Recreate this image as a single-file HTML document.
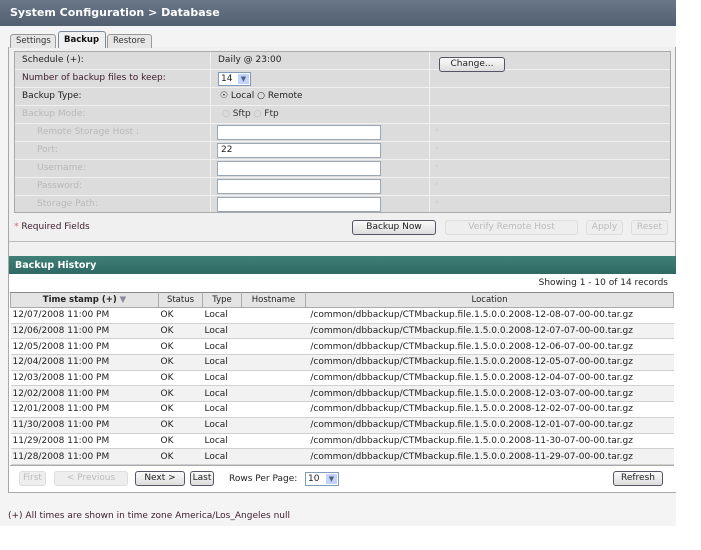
<!DOCTYPE html>
<html><head><style>
*{box-sizing:border-box;margin:0;padding:0}
body{width:701px;height:550px;background:#fff;font-family:"DejaVu Sans","Liberation Sans",sans-serif;font-size:9px;color:#222;position:relative;overflow:hidden}
.page{position:absolute;left:0;top:0;width:676px;height:526px;background:#f4f4f4}
.hdr{position:absolute;left:0;top:0;width:676px;height:26px;background:linear-gradient(#6a7789,#525f70);color:#fff;font-weight:bold;font-size:11px;padding:6px 0 0 10px;font-family:"DejaVu Sans",sans-serif}
.outer{position:absolute;left:8px;top:47px;width:668px;height:446px;border:1px solid #a8a8a8;border-top:none;background:#f0f0f0}
.tab{position:absolute;top:34px;height:14px;border:1px solid #999;border-bottom:none;background:#e6e6e6;font-size:8.5px;padding:1px 5px;border-radius:3px 3px 0 0;color:#333}
.tab.on{top:31px;height:17px;background:#f0f0f0;font-weight:bold;color:#111;padding-top:3px;border-color:#7a8a9a;z-index:2}
.tabline{position:absolute;left:8px;top:47px;width:668px;border-top:1px solid #a8a8a8}
.form{position:absolute;left:14px;top:51px;width:657px;height:162px;border:1px solid #aaa;background:#dcdcdc}
.row{position:absolute;left:0;width:655px;height:18px;border-bottom:1px solid #f0f0f0}
.row span{position:absolute;top:3px}
.c1{left:7px}.c2{left:203px}
.vl{position:absolute;top:0;width:1px;height:160px;background:#f0f0f0}
.dis{color:#b8b8b8}
.inp{position:absolute;left:202px;top:1px;width:164px;height:15px;background:#fff;border:1px solid #9aa7b5;font-size:9px;padding:1px 3px}
.star{position:absolute;left:420px;top:4px;color:#ccc;font-size:7px}
.btn{position:absolute;height:15px;border:1px solid #556;border-radius:3px;background:linear-gradient(#fafafa,#ddd);font-size:9px;text-align:center;padding-top:1px;color:#222}
.btn.d{border-color:#ddd;color:#bbb;background:#eee}
.bh{position:absolute;left:9px;top:256px;width:667px;height:18px;background:linear-gradient(#3f8078,#2e6963);color:#fff;font-weight:bold;font-size:9.5px;padding:4px 0 0 6px}
.tbl{position:absolute;left:10px;top:292px;width:664px;border-collapse:collapse;font-size:9px}
.tbl th{background:#e4e4e4;font-weight:normal;height:15px;border:1px solid #aaa;border-top:1px solid #888;font-size:8.5px}
.tbl td{height:15.7px;padding:0 0 0 2px;border-bottom:1px solid #d0d0d0;background:#fff}
.tbl tr:nth-child(odd) td{background:#f2f2f2}
.sel{position:absolute;border:1px solid #7f9db9;background:#fff;height:14px;font-size:9px;padding:1px 2px}
.sel b{position:absolute;right:1px;top:1px;width:11px;height:10px;background:#c3d3fd;color:#4d6185;font-size:7px;text-align:center;line-height:10px}
</style></head><body>
<div class="page"></div>
<div class="hdr">System Configuration &gt; Database</div>
<div class="outer"></div>
<div class="tab" style="left:10px;width:46px">Settings</div>
<div class="tab on" style="left:58px;width:48px">Backup</div>
<div class="tab" style="left:107px;width:45px">Restore</div>
<div class="form">
 <div class="vl" style="left:195px"></div><div class="vl" style="left:414px"></div>
 <div class="row" style="top:0"><span class="c1">Schedule (+):</span><span class="c2">Daily @ 23:00</span></div>
 <div class="row" style="top:18px"><span class="c1" style="color:#402030">Number of backup files to keep:</span><div class="sel" style="left:203px;top:2px;width:33px">14<b>&#9660;</b></div></div>
 <div class="row" style="top:36px"><span class="c1">Backup Type:</span><span class="c2" style="left:205px">&#9737; Local &#9675; Remote</span></div>
 <div class="row" style="top:54px"><span class="c1 dis">Backup Mode:</span><span class="c2 dis" style="left:207px">&#9675; <span style="position:static;color:#333">Sftp</span> &#9675; <span style="position:static;color:#333">Ftp</span></span></div>
 <div class="row" style="top:72px"><span class="c1 dis" style="left:22px">Remote Storage Host :</span><div class="inp"></div><span class="star">*</span></div>
 <div class="row" style="top:90px"><span class="c1 dis" style="left:22px">Port:</span><div class="inp">22</div><span class="star">*</span></div>
 <div class="row" style="top:108px"><span class="c1 dis" style="left:22px">Username:</span><div class="inp"></div><span class="star">*</span></div>
 <div class="row" style="top:126px"><span class="c1 dis" style="left:22px">Password:</span><div class="inp"></div><span class="star">*</span></div>
 <div class="row" style="top:144px;border:none"><span class="c1 dis" style="left:22px">Storage Path:</span><div class="inp"></div><span class="star">*</span></div>
</div>
<div class="btn" style="left:439px;top:57px;width:66px">Change...</div>
<div style="position:absolute;left:14px;top:222px;color:#402030"><span style="color:#c66">*</span> Required Fields</div>
<div class="btn" style="left:352px;top:220px;width:84px">Backup Now</div>
<div class="btn d" style="left:445px;top:220px;width:133px">Verify Remote Host</div>
<div class="btn d" style="left:586px;top:220px;width:37px">Apply</div>
<div class="btn d" style="left:631px;top:220px;width:37px">Reset</div>
<div style="position:absolute;left:9px;top:241px;width:667px;border-top:1px solid #bbb"></div>
<div class="bh">Backup History</div>
<div style="position:absolute;left:9px;top:274px;width:667px;height:218px;background:#fff"></div>
<div style="position:absolute;right:33px;top:278px">Showing 1 - 10 of 14 records</div>
<table class="tbl">
<tr><th style="width:148px;font-weight:bold">Time stamp (+) <span style="color:#889">&#9660;</span></th><th style="width:44px">Status</th><th style="width:39px">Type</th><th style="width:64px">Hostname</th><th>Location</th></tr>
<tr><td>12/07/2008 11:00 PM</td><td>OK</td><td>Local</td><td></td><td>&nbsp;/common/dbbackup/CTMbackup.file.1.5.0.0.2008-12-08-07-00-00.tar.gz</td></tr>
<tr><td>12/06/2008 11:00 PM</td><td>OK</td><td>Local</td><td></td><td>&nbsp;/common/dbbackup/CTMbackup.file.1.5.0.0.2008-12-07-07-00-00.tar.gz</td></tr>
<tr><td>12/05/2008 11:00 PM</td><td>OK</td><td>Local</td><td></td><td>&nbsp;/common/dbbackup/CTMbackup.file.1.5.0.0.2008-12-06-07-00-00.tar.gz</td></tr>
<tr><td>12/04/2008 11:00 PM</td><td>OK</td><td>Local</td><td></td><td>&nbsp;/common/dbbackup/CTMbackup.file.1.5.0.0.2008-12-05-07-00-00.tar.gz</td></tr>
<tr><td>12/03/2008 11:00 PM</td><td>OK</td><td>Local</td><td></td><td>&nbsp;/common/dbbackup/CTMbackup.file.1.5.0.0.2008-12-04-07-00-00.tar.gz</td></tr>
<tr><td>12/02/2008 11:00 PM</td><td>OK</td><td>Local</td><td></td><td>&nbsp;/common/dbbackup/CTMbackup.file.1.5.0.0.2008-12-03-07-00-00.tar.gz</td></tr>
<tr><td>12/01/2008 11:00 PM</td><td>OK</td><td>Local</td><td></td><td>&nbsp;/common/dbbackup/CTMbackup.file.1.5.0.0.2008-12-02-07-00-00.tar.gz</td></tr>
<tr><td>11/30/2008 11:00 PM</td><td>OK</td><td>Local</td><td></td><td>&nbsp;/common/dbbackup/CTMbackup.file.1.5.0.0.2008-12-01-07-00-00.tar.gz</td></tr>
<tr><td>11/29/2008 11:00 PM</td><td>OK</td><td>Local</td><td></td><td>&nbsp;/common/dbbackup/CTMbackup.file.1.5.0.0.2008-11-30-07-00-00.tar.gz</td></tr>
<tr><td>11/28/2008 11:00 PM</td><td>OK</td><td>Local</td><td></td><td>&nbsp;/common/dbbackup/CTMbackup.file.1.5.0.0.2008-11-29-07-00-00.tar.gz</td></tr>
</table>
<div style="position:absolute;left:10px;top:465px;width:664px;border-top:1px solid #aaa"></div>
<div class="btn d" style="left:19px;top:471px;width:27px">First</div>
<div class="btn d" style="left:54px;top:471px;width:74px">&lt; Previous</div>
<div class="btn" style="left:135px;top:471px;width:50px">Next &gt;</div>
<div class="btn" style="left:190px;top:471px;width:24px">Last</div>
<div style="position:absolute;left:229px;top:474px">Rows Per Page:</div>
<div class="sel" style="left:305px;top:472px;width:34px">10<b>&#9660;</b></div>
<div class="btn" style="left:613px;top:471px;width:50px">Refresh</div>
<div style="position:absolute;left:8px;top:511px;color:#402030">(+) All times are shown in time zone America/Los_Angeles null</div>
</body></html>
